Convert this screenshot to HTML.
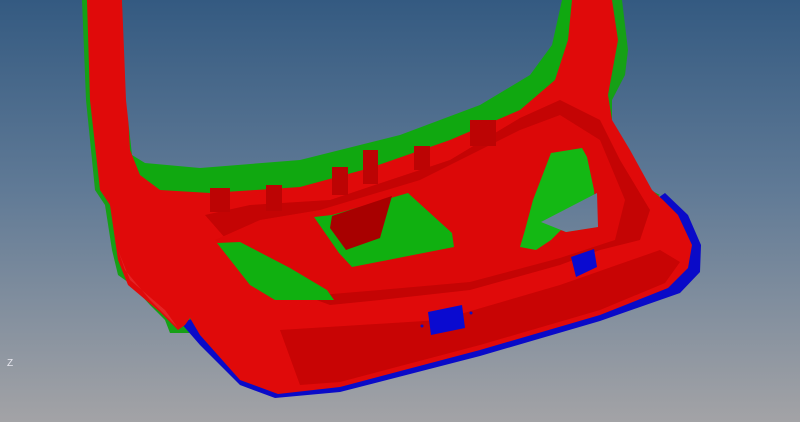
<!DOCTYPE html>
<html><head><style>
html,body{margin:0;padding:0;width:800px;height:422px;overflow:hidden}
svg{display:block}
</style></head><body>
<svg width="800" height="422" viewBox="0 0 800 422" xmlns="http://www.w3.org/2000/svg">
<defs>
<linearGradient id="bg" gradientUnits="userSpaceOnUse" x1="0" y1="0" x2="0" y2="422">
<stop offset="0" stop-color="#345a81"/>
<stop offset="0.45" stop-color="#607a96"/>
<stop offset="1" stop-color="#a3a3a6"/>
</linearGradient>
</defs>
<rect width="800" height="422" fill="url(#bg)"/>
<polygon fill="#16a016" points="82,0 86,100 95,190 105,205 112,250 118,275 132,285 150,305 165,320 170,333 190,333 200,320 650,200 660,195 640,185 622,150 612,130 612,100 625,75 628,50 622,0"/>
<polygon fill="#0a0ac8" points="180,322 200,345 240,385 275,398 340,392 480,356 600,321 680,293 700,272 701,245 688,215 665,193 655,200 640,210"/>
<polygon fill="#e00a0a" points="87,0 90,100 100,190 110,205 118,260 128,285 160,312 178,330 185,325 190,318 200,335 240,380 278,394 340,387 480,350 600,315 668,288 688,268 692,245 678,215 663,200 652,190 630,150 612,120 608,95 618,40 612,0"/>
<polygon fill="#c80404" points="280,330 300,385 340,382 480,345 600,310 665,283 680,262 660,250 560,285 440,320"/>
<polygon fill="#c40404" points="205,215 250,205 330,200 360,190 450,160 520,118 560,100 600,120 620,160 650,210 640,240 600,250 560,265 470,290 380,300 330,305 290,290 240,255"/>
<polygon fill="#dc0808" points="215,240 260,220 320,210 420,180 520,130 560,115 600,140 625,200 615,240 560,258 470,282 380,290 320,295 270,270"/>
<polygon fill="#10a810" points="122,0 130,150 140,175 160,190 210,193 300,187 370,168 450,140 520,110 555,80 568,40 572,0"/>
<polygon fill="url(#bg)" points="122,0 126,100 132,155 145,163 200,168 300,160 400,135 480,105 530,75 552,45 562,0"/>
<g fill="#bc0404">
<rect x="210" y="188" width="20" height="24"/>
<rect x="266" y="185" width="16" height="26"/>
<rect x="332" y="167" width="16" height="28"/>
<rect x="363" y="150" width="15" height="34"/>
<rect x="414" y="146" width="16" height="24"/>
<rect x="470" y="120" width="26" height="26"/>
</g>
<polygon fill="#10b010" points="217,243 240,242 290,268 327,290 334,300 275,300 250,285"/>
<polygon fill="#10b010" points="314,217 332,215 408,193 452,233 454,247 352,267 339,253"/>
<polygon fill="#a80000" points="332,216 392,196 380,238 346,250 330,228"/>
<polygon fill="#14b814" points="551,153 582,148 587,157 594,190 597,227 566,232 561,230 551,240 536,250 520,247 525,230 533,200"/>
<polygon fill="url(#bg)" points="541,222 597,193 598,227 566,232"/>
<polygon fill="#0a0ad0" points="428,312 462,305 465,328 431,335"/>
<polygon fill="#0a0ad0" points="571,257 594,249 597,267 576,277"/>
<circle cx="471" cy="313" r="1.5" fill="#1010c0"/>
<circle cx="422" cy="326" r="1.5" fill="#1010c0"/>
<polygon fill="#e84040" points="118,250 130,280 165,310 178,328 150,300 125,270" opacity="0.5"/>
<text x="7" y="366" fill="#e8e8f0" font-family="Liberation Sans, sans-serif" font-size="10">Z</text>
</svg>
</body></html>
